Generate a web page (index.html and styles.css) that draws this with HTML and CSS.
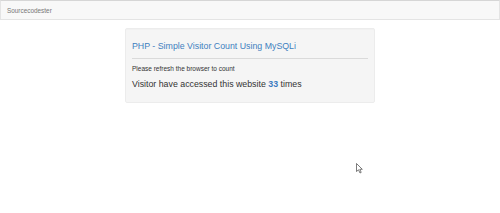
FILE: index.html
```html
<!DOCTYPE html>
<html>
<head>
<meta charset="utf-8">
<link rel="stylesheet" href="styles.css">
</head>
<body>
<nav class="navbar">
  <span class="brand">Sourcecodester</span>
</nav>
<main class="content">
  <div class="well">
    <h3 class="title">PHP - Simple Visitor Count Using MySQLi</h3>
    <hr class="rule">
    <p class="note">Please refresh the browser to count</p>
    <p class="count">Visitor have accessed this website <span class="num">33</span> times</p>
  </div>
</main>
<svg class="cursor" width="7" height="11" viewBox="0 0 7 11"><path d="M0.5 0.5 L0.5 8.5 L2.5 6.8 L4 10 L5.2 9.4 L3.8 6.3 L6.3 6.3 Z" fill="#fff" stroke="#444" stroke-width="0.7"/></svg>
</body>
</html>
```

FILE: styles.css
```css
html, body {
  margin: 0;
  padding: 0;
  background: #fff;
  font-family: "Liberation Sans", Arial, sans-serif;
  color: #333;
}
.navbar {
  height: 18px;
  background: #f8f8f8;
  border: 1px solid #e4e4e4;
  border-top-color: #d6d6d6;
  display: flex;
  align-items: center;
  padding-left: 6px;
}
.brand {
  font-size: 6.4px;
  color: #777;
}
.content {
  display: flex;
  justify-content: center;
  padding-top: 8px;
}
.well {
  width: 250px;
  box-sizing: border-box;
  background: #f5f5f5;
  border: 1px solid #ececec;
  border-radius: 2px;
  box-shadow: inset 0 1px 1px rgba(0,0,0,.02);
  padding: 12px 6px 12px 6px;
}
.title {
  margin: 0;
  font-size: 8.8px;
  font-weight: normal;
  color: #3f7fc0;
  line-height: 11px;
}
.rule {
  margin: 6px 0 6px 0;
  border: 0;
  border-top: 1px solid #dadada;
}
.note {
  margin: 0;
  font-size: 6.5px;
  line-height: 8px;
}
.count {
  margin: 6px 0 0 0;
  font-size: 8.8px;
  line-height: 11px;
}
.num {
  font-weight: bold;
  color: #3a7bbf;
}
.cursor {
  position: absolute;
  left: 356px;
  top: 163px;
}
```
